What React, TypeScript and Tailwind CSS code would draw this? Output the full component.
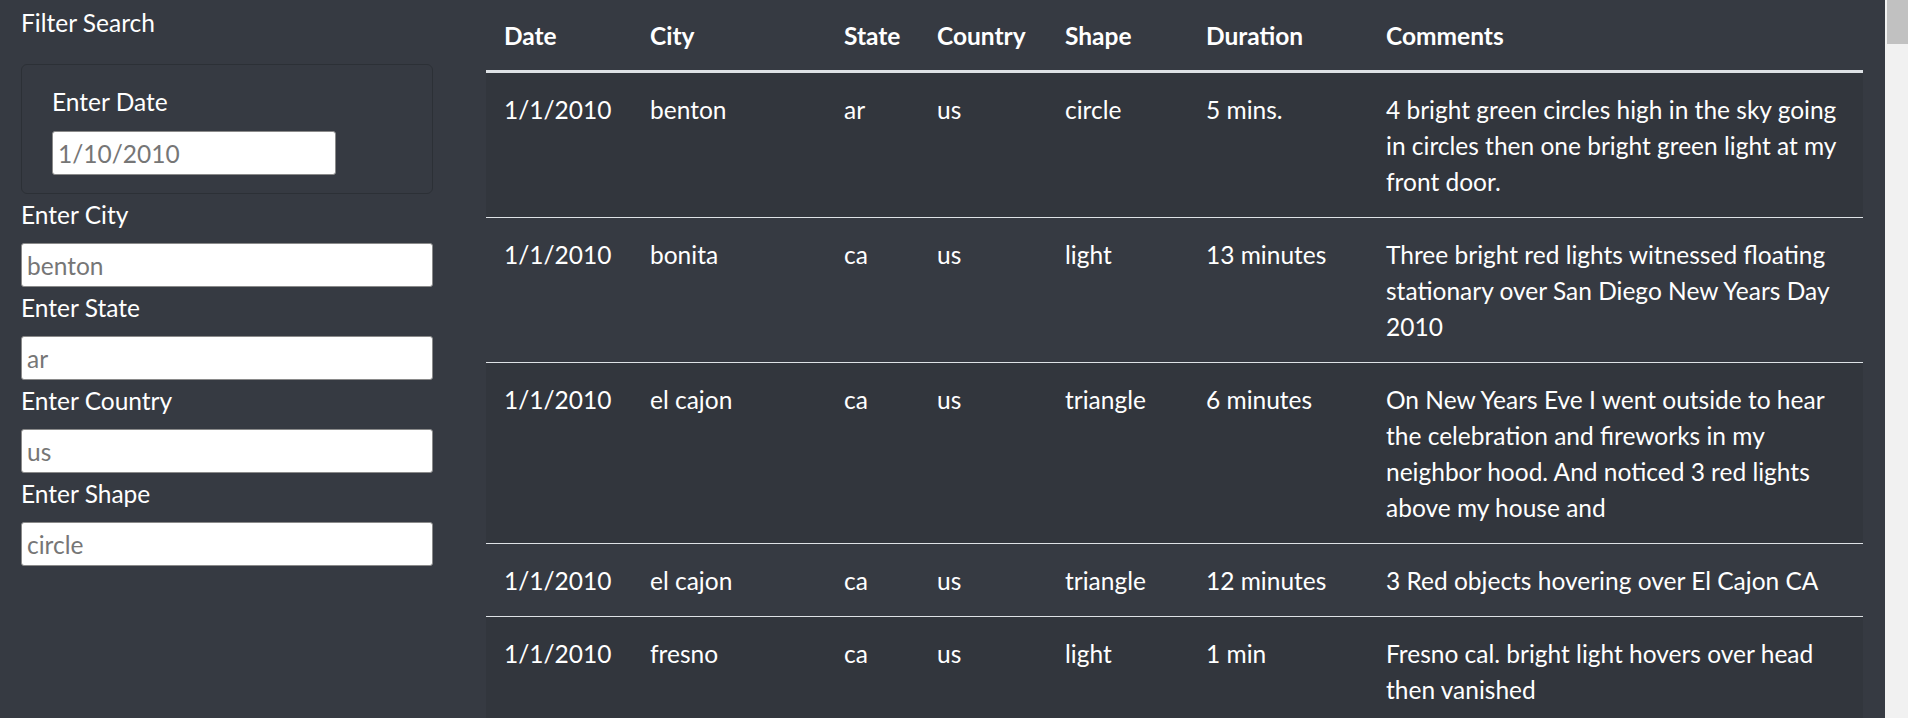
import React from "react";

type Row = {
  date: string;
  city: string;
  state: string;
  country: string;
  shape: string;
  duration: string;
  comments: string[];
};

const rows: Row[] = [
  {
    date: "1/1/2010",
    city: "benton",
    state: "ar",
    country: "us",
    shape: "circle",
    duration: "5 mins.",
    comments: [
      "4 bright green circles high in the sky going",
      "in circles then one bright green light at my",
      "front door.",
    ],
  },
  {
    date: "1/1/2010",
    city: "bonita",
    state: "ca",
    country: "us",
    shape: "light",
    duration: "13 minutes",
    comments: [
      "Three bright red lights witnessed floating",
      "stationary over San Diego New Years Day",
      "2010",
    ],
  },
  {
    date: "1/1/2010",
    city: "el cajon",
    state: "ca",
    country: "us",
    shape: "triangle",
    duration: "6 minutes",
    comments: [
      "On New Years Eve I went outside to hear",
      "the celebration and fireworks in my",
      "neighbor hood. And noticed 3 red lights",
      "above my house and",
    ],
  },
  {
    date: "1/1/2010",
    city: "el cajon",
    state: "ca",
    country: "us",
    shape: "triangle",
    duration: "12 minutes",
    comments: ["3 Red objects hovering over El Cajon CA"],
  },
  {
    date: "1/1/2010",
    city: "fresno",
    state: "ca",
    country: "us",
    shape: "light",
    duration: "1 min",
    comments: ["Fresno cal. bright light hovers over head", "then vanished"],
  },
];

const inputCls =
  "block w-full h-[44px] bg-white border border-[#8a8a8a] rounded-[3px] px-[5px] text-[24.5px] text-[#495057] placeholder:text-[#767676] outline-none";

const tdCls =
  "px-[18px] pt-[19px] pb-[17px] leading-[36px] align-top border-b border-[#dee2e6]";

function Field({ label, placeholder }: { label: string; placeholder: string }) {
  return (
    <div className="mt-[3px]">
      <label className="block leading-[36px]">{label}</label>
      <input className={inputCls + " mt-[10px]"} placeholder={placeholder} />
    </div>
  );
}

export default function App() {
  return (
    <div className="flex h-[718px] w-full overflow-hidden bg-[#363a42] text-white font-['Segoe_UI',Lato,sans-serif] text-[24.5px]">
      <div className="flex flex-1 overflow-hidden">
        {/* Sidebar */}
        <div className="w-[486px] shrink-0 pl-[21px]">
          <div className="w-[412px]">
            <div className="pt-[5px] leading-[36px]">Filter Search</div>
            <div className="mt-[23px] border border-[#2c3036] rounded-[6px] pt-[19px] pl-[30px] pb-[18px]">
              <label className="block leading-[36px]">Enter Date</label>
              <input
                className={inputCls + " mt-[11px] !w-[284px]"}
                placeholder="1/10/2010"
              />
            </div>
            <Field label="Enter City" placeholder="benton" />
            <Field label="Enter State" placeholder="ar" />
            <Field label="Enter Country" placeholder="us" />
            <Field label="Enter Shape" placeholder="circle" />
          </div>
        </div>

        {/* Table */}
        <div className="shrink-0">
          <table className="table-fixed border-collapse w-[1377px] text-left">
            <colgroup>
              <col className="w-[146px]" />
              <col className="w-[194px]" />
              <col className="w-[93px]" />
              <col className="w-[128px]" />
              <col className="w-[141px]" />
              <col className="w-[180px]" />
              <col className="w-[495px]" />
            </colgroup>
            <thead>
              <tr>
                {["Date", "City", "State", "Country", "Shape", "Duration", "Comments"].map(
                  (h) => (
                    <th
                      key={h}
                      className="px-[18px] pt-[18px] pb-[16px] leading-[36px] font-bold border-b-[3px] border-[#dee2e6] align-top"
                    >
                      {h}
                    </th>
                  )
                )}
              </tr>
            </thead>
            <tbody>
              {rows.map((r, i) => (
                <tr key={i} className={i % 2 === 0 ? "bg-[#32363d]" : "bg-[#363a42]"}>
                  <td className={tdCls + " whitespace-nowrap"}>{r.date}</td>
                  <td className={tdCls + " whitespace-nowrap"}>{r.city}</td>
                  <td className={tdCls + " whitespace-nowrap"}>{r.state}</td>
                  <td className={tdCls + " whitespace-nowrap"}>{r.country}</td>
                  <td className={tdCls + " whitespace-nowrap"}>{r.shape}</td>
                  <td className={tdCls + " whitespace-nowrap"}>{r.duration}</td>
                  <td className={tdCls}>
                    {r.comments.map((c, j) => (
                      <div key={j} className="whitespace-nowrap">
                        {c}
                      </div>
                    ))}
                  </td>
                </tr>
              ))}
            </tbody>
          </table>
        </div>
      </div>

      {/* Scrollbar */}
      <div className="w-[23px] shrink-0 bg-[#f1f1f1] flex flex-col">
        <div className="ml-[2px] h-[44px] bg-[#c1c1c1]" />
      </div>
    </div>
  );
}
